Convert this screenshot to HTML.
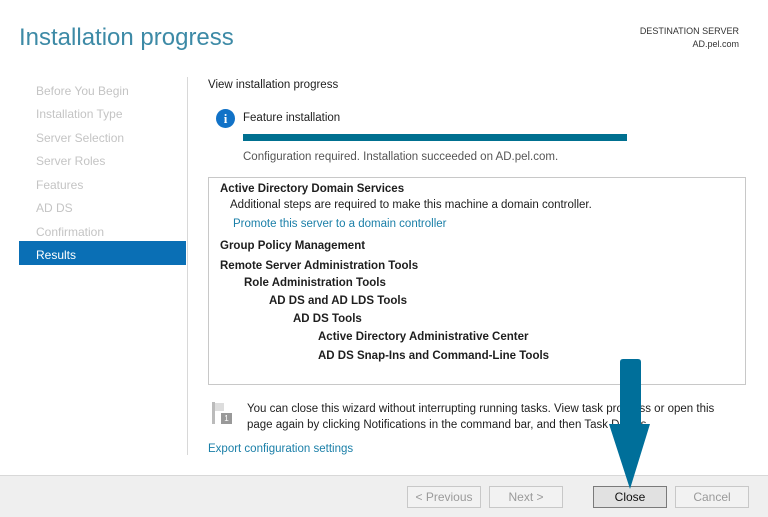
<!DOCTYPE html>
<html><head><style>
body{margin:0;width:768px;height:516px;background:#fff;font-family:"Liberation Sans",sans-serif;position:relative;overflow:hidden;color:#1e1e1e}
.a{position:absolute;white-space:nowrap}
.nav{position:absolute;left:36px;font-size:12px;color:#c4c4c4}
.t{font-size:11.5px}
.b{font-size:11.5px;font-weight:bold}
.btn{position:absolute;top:486px;height:20px;border:1px solid #c8c8c8;background:#f2f2f2;font-size:12px;color:#9a9a9a;text-align:center;line-height:20px}
</style></head><body>
<div class="a" style="left:19px;top:24px;font-size:24px;color:#3d8aa6;font-weight:300">Installation progress</div>
<div class="a" style="right:29px;top:25px;font-size:9px;color:#333;text-align:right;line-height:13px">DESTINATION SERVER<br>AD.pel.com</div>
<div class="nav" style="top:84px">Before You Begin</div>
<div class="nav" style="top:107px">Installation Type</div>
<div class="nav" style="top:131px">Server Selection</div>
<div class="nav" style="top:154px">Server Roles</div>
<div class="nav" style="top:178px">Features</div>
<div class="nav" style="top:201px">AD DS</div>
<div class="nav" style="top:225px">Confirmation</div>
<div style="position:absolute;left:19px;top:241px;width:167px;height:24px;background:#0a6fb5"></div>
<div class="nav" style="top:248px;color:#fff">Results</div>
<div style="position:absolute;left:187px;top:77px;width:1px;height:378px;background:#d8d8d8"></div>
<div class="a t" style="left:208px;top:79px">View installation progress</div>
<div style="position:absolute;left:216px;top:109px;width:19px;height:19px;border-radius:50%;background:#1172c7;color:#fff;font-weight:bold;font-size:13px;text-align:center;line-height:19px;font-family:'Liberation Serif',serif">i</div>
<div class="a t" style="left:243px;top:112px">Feature installation</div>
<div style="position:absolute;left:243px;top:134px;width:384px;height:7px;background:#007090"></div>
<div class="a t" style="left:243px;top:151px;color:#555">Configuration required. Installation succeeded on AD.pel.com.</div>
<div style="position:absolute;left:208px;top:177px;width:536px;height:206px;border:1px solid #c8c8c8"></div>
<div class="a b" style="left:220px;top:183px">Active Directory Domain Services</div>
<div class="a t" style="left:230px;top:199px">Additional steps are required to make this machine a domain controller.</div>
<div class="a t" style="left:233px;top:218px;color:#1a7fa8">Promote this server to a domain controller</div>
<div class="a b" style="left:220px;top:240px">Group Policy Management</div>
<div class="a b" style="left:220px;top:260px">Remote Server Administration Tools</div>
<div class="a b" style="left:244px;top:277px">Role Administration Tools</div>
<div class="a b" style="left:269px;top:295px">AD DS and AD LDS Tools</div>
<div class="a b" style="left:293px;top:313px">AD DS Tools</div>
<div class="a b" style="left:318px;top:331px">Active Directory Administrative Center</div>
<div class="a b" style="left:318px;top:350px">AD DS Snap-Ins and Command-Line Tools</div>
<div style="position:absolute;left:212px;top:402px;width:3px;height:22px;background:#bbb"></div>
<div style="position:absolute;left:215px;top:403px;width:9px;height:8px;background:#ddd"></div>
<div style="position:absolute;left:221px;top:413px;width:11px;height:11px;background:#999;color:#fff;font-size:8px;text-align:center;line-height:11px">1</div>
<div class="a t" style="left:247px;top:401px;line-height:16px">You can close this wizard without interrupting running tasks. View task progress or open this<br>page again by clicking Notifications in the command bar, and then Task Details.</div>
<div class="a t" style="left:208px;top:443px;color:#1a7fa8">Export configuration settings</div>
<div style="position:absolute;left:0;top:475px;width:768px;height:41px;background:#efefef;border-top:1px solid #d8d8d8"></div>
<div class="btn" style="left:407px;width:72px">&lt; Previous</div>
<div class="btn" style="left:489px;width:72px">Next &gt;</div>
<div class="btn" style="left:593px;width:72px;border-color:#7a7a7a;background:#e1e1e1;color:#111">Close</div>
<div class="btn" style="left:675px;width:72px">Cancel</div>
<svg style="position:absolute;left:0;top:0" width="768" height="516"><path d="M620 362 Q620 359 623 359 L638 359 Q641 359 641 362 L641 424 L650 424 L630 489 L609 424 L620 424 Z" fill="#006f9a"/></svg>
</body></html>
